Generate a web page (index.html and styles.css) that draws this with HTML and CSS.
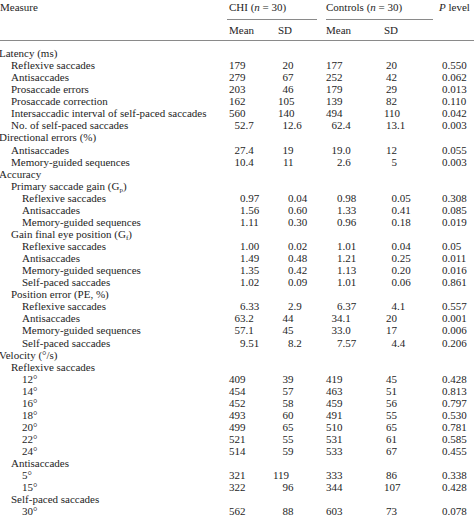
FILE: index.html
```html
<!DOCTYPE html>
<html>
<head>
<meta charset="utf-8">
<link rel="stylesheet" href="styles.css">
</head>
<body>
<div class="table">
  <div class="head">
    <div class="hrow top">
      <span class="lab">Measure</span>
      <span class="grp chi">CHI (<i>n</i> = 30)</span>
      <span class="grp ctl">Controls (<i>n</i> = 30)</span>
      <span class="plev"><i>P</i> level</span>
    </div>
    <div class="hrow sub">
      <span class="lab"></span>
      <span class="hc">Mean</span>
      <span class="hc">SD</span>
      <span class="hc">Mean</span>
      <span class="hc">SD</span>
      <span></span>
    </div>
  </div>
  <div class="body">
    <div class="row l0"><span class="lab">Latency (ms)</span></div>
    <div class="row l1"><span class="lab">Reflexive saccades</span><span class="n c1"><span class="i">179</span></span><span class="n c2"><span class="i">20</span></span><span class="n c3"><span class="i">177</span></span><span class="n c4"><span class="i">20</span></span><span class="p">0.550</span></div>
    <div class="row l1"><span class="lab">Antisaccades</span><span class="n c1"><span class="i">279</span></span><span class="n c2"><span class="i">67</span></span><span class="n c3"><span class="i">252</span></span><span class="n c4"><span class="i">42</span></span><span class="p">0.062</span></div>
    <div class="row l1"><span class="lab">Prosaccade errors</span><span class="n c1"><span class="i">203</span></span><span class="n c2"><span class="i">46</span></span><span class="n c3"><span class="i">179</span></span><span class="n c4"><span class="i">29</span></span><span class="p">0.013</span></div>
    <div class="row l1"><span class="lab">Prosaccade correction</span><span class="n c1"><span class="i">162</span></span><span class="n c2"><span class="i">105</span></span><span class="n c3"><span class="i">139</span></span><span class="n c4"><span class="i">82</span></span><span class="p">0.110</span></div>
    <div class="row l1"><span class="lab">Intersaccadic interval of self-paced saccades</span><span class="n c1"><span class="i">560</span></span><span class="n c2"><span class="i">140</span></span><span class="n c3"><span class="i">494</span></span><span class="n c4"><span class="i">110</span></span><span class="p">0.042</span></div>
    <div class="row l1"><span class="lab">No. of self-paced saccades</span><span class="n c1"><span class="i">52</span>.7</span><span class="n c2"><span class="i">12</span>.6</span><span class="n c3"><span class="i">62</span>.4</span><span class="n c4"><span class="i">13</span>.1</span><span class="p">0.003</span></div>
    <div class="row l0"><span class="lab">Directional errors (%)</span></div>
    <div class="row l1"><span class="lab">Antisaccades</span><span class="n c1"><span class="i">27</span>.4</span><span class="n c2"><span class="i">19</span></span><span class="n c3"><span class="i">19</span>.0</span><span class="n c4"><span class="i">12</span></span><span class="p">0.055</span></div>
    <div class="row l1"><span class="lab">Memory-guided sequences</span><span class="n c1"><span class="i">10</span>.4</span><span class="n c2"><span class="i">11</span></span><span class="n c3"><span class="i">2</span>.6</span><span class="n c4"><span class="i">5</span></span><span class="p">0.003</span></div>
    <div class="row l0"><span class="lab">Accuracy</span></div>
    <div class="row l1"><span class="lab">Primary saccade gain (G<sub>p</sub>)</span></div>
    <div class="row l2"><span class="lab">Reflexive saccades</span><span class="n c1"><span class="i">0</span>.97</span><span class="n c2"><span class="i">0</span>.04</span><span class="n c3"><span class="i">0</span>.98</span><span class="n c4"><span class="i">0</span>.05</span><span class="p">0.308</span></div>
    <div class="row l2"><span class="lab">Antisaccades</span><span class="n c1"><span class="i">1</span>.56</span><span class="n c2"><span class="i">0</span>.60</span><span class="n c3"><span class="i">1</span>.33</span><span class="n c4"><span class="i">0</span>.41</span><span class="p">0.085</span></div>
    <div class="row l2"><span class="lab">Memory-guided sequences</span><span class="n c1"><span class="i">1</span>.11</span><span class="n c2"><span class="i">0</span>.30</span><span class="n c3"><span class="i">0</span>.96</span><span class="n c4"><span class="i">0</span>.18</span><span class="p">0.019</span></div>
    <div class="row l1"><span class="lab">Gain final eye position (G<sub>f</sub>)</span></div>
    <div class="row l2"><span class="lab">Reflexive saccades</span><span class="n c1"><span class="i">1</span>.00</span><span class="n c2"><span class="i">0</span>.02</span><span class="n c3"><span class="i">1</span>.01</span><span class="n c4"><span class="i">0</span>.04</span><span class="p">0.05</span></div>
    <div class="row l2"><span class="lab">Antisaccades</span><span class="n c1"><span class="i">1</span>.49</span><span class="n c2"><span class="i">0</span>.48</span><span class="n c3"><span class="i">1</span>.21</span><span class="n c4"><span class="i">0</span>.25</span><span class="p">0.011</span></div>
    <div class="row l2"><span class="lab">Memory-guided sequences</span><span class="n c1"><span class="i">1</span>.35</span><span class="n c2"><span class="i">0</span>.42</span><span class="n c3"><span class="i">1</span>.13</span><span class="n c4"><span class="i">0</span>.20</span><span class="p">0.016</span></div>
    <div class="row l2"><span class="lab">Self-paced saccades</span><span class="n c1"><span class="i">1</span>.02</span><span class="n c2"><span class="i">0</span>.09</span><span class="n c3"><span class="i">1</span>.01</span><span class="n c4"><span class="i">0</span>.06</span><span class="p">0.861</span></div>
    <div class="row l1"><span class="lab">Position error (PE, %)</span></div>
    <div class="row l2"><span class="lab">Reflexive saccades</span><span class="n c1"><span class="i">6</span>.33</span><span class="n c2"><span class="i">2</span>.9</span><span class="n c3"><span class="i">6</span>.37</span><span class="n c4"><span class="i">4</span>.1</span><span class="p">0.557</span></div>
    <div class="row l2"><span class="lab">Antisaccades</span><span class="n c1"><span class="i">63</span>.2</span><span class="n c2"><span class="i">44</span></span><span class="n c3"><span class="i">34</span>.1</span><span class="n c4"><span class="i">20</span></span><span class="p">0.001</span></div>
    <div class="row l2"><span class="lab">Memory-guided sequences</span><span class="n c1"><span class="i">57</span>.1</span><span class="n c2"><span class="i">45</span></span><span class="n c3"><span class="i">33</span>.0</span><span class="n c4"><span class="i">17</span></span><span class="p">0.006</span></div>
    <div class="row l2"><span class="lab">Self-paced saccades</span><span class="n c1"><span class="i">9</span>.51</span><span class="n c2"><span class="i">8</span>.2</span><span class="n c3"><span class="i">7</span>.57</span><span class="n c4"><span class="i">4</span>.4</span><span class="p">0.206</span></div>
    <div class="row l0"><span class="lab">Velocity (°/s)</span></div>
    <div class="row l1"><span class="lab">Reflexive saccades</span></div>
    <div class="row l2"><span class="lab">12°</span><span class="n c1"><span class="i">409</span></span><span class="n c2"><span class="i">39</span></span><span class="n c3"><span class="i">419</span></span><span class="n c4"><span class="i">45</span></span><span class="p">0.428</span></div>
    <div class="row l2"><span class="lab">14°</span><span class="n c1"><span class="i">454</span></span><span class="n c2"><span class="i">57</span></span><span class="n c3"><span class="i">463</span></span><span class="n c4"><span class="i">51</span></span><span class="p">0.813</span></div>
    <div class="row l2"><span class="lab">16°</span><span class="n c1"><span class="i">452</span></span><span class="n c2"><span class="i">58</span></span><span class="n c3"><span class="i">459</span></span><span class="n c4"><span class="i">56</span></span><span class="p">0.797</span></div>
    <div class="row l2"><span class="lab">18°</span><span class="n c1"><span class="i">493</span></span><span class="n c2"><span class="i">60</span></span><span class="n c3"><span class="i">491</span></span><span class="n c4"><span class="i">55</span></span><span class="p">0.530</span></div>
    <div class="row l2"><span class="lab">20°</span><span class="n c1"><span class="i">499</span></span><span class="n c2"><span class="i">65</span></span><span class="n c3"><span class="i">510</span></span><span class="n c4"><span class="i">65</span></span><span class="p">0.781</span></div>
    <div class="row l2"><span class="lab">22°</span><span class="n c1"><span class="i">521</span></span><span class="n c2"><span class="i">55</span></span><span class="n c3"><span class="i">531</span></span><span class="n c4"><span class="i">61</span></span><span class="p">0.585</span></div>
    <div class="row l2"><span class="lab">24°</span><span class="n c1"><span class="i">514</span></span><span class="n c2"><span class="i">59</span></span><span class="n c3"><span class="i">533</span></span><span class="n c4"><span class="i">67</span></span><span class="p">0.455</span></div>
    <div class="row l1"><span class="lab">Antisaccades</span></div>
    <div class="row l2"><span class="lab">5°</span><span class="n c1"><span class="i">321</span></span><span class="n c2 sh"><span class="i">119</span></span><span class="n c3"><span class="i">333</span></span><span class="n c4"><span class="i">86</span></span><span class="p">0.338</span></div>
    <div class="row l2"><span class="lab">15°</span><span class="n c1"><span class="i">322</span></span><span class="n c2"><span class="i">96</span></span><span class="n c3"><span class="i">344</span></span><span class="n c4"><span class="i">107</span></span><span class="p">0.428</span></div>
    <div class="row l1"><span class="lab">Self-paced saccades</span></div>
    <div class="row l2"><span class="lab">30°</span><span class="n c1"><span class="i">562</span></span><span class="n c2"><span class="i">88</span></span><span class="n c3"><span class="i">603</span></span><span class="n c4"><span class="i">73</span></span><span class="p">0.078</span></div>
  </div>
</div>
</body>
</html>
```

FILE: styles.css
```css
html, body {
  margin: 0;
  padding: 0;
  background: #ffffff;
}

body {
  font-family: "Liberation Serif", "Times New Roman", serif;
  font-size: 11px;
  color: #1e1e1e;
  width: 474px;
  overflow: hidden;
}

.table {
  width: 474px;
}

.head {
  padding-top: 1px;
  border-bottom: 1px solid #8a8a8a;
  padding-bottom: 4px;
}

.hrow,
.row {
  display: grid;
  grid-template-columns: 229px 49px 48px 58px 52px 38px;
  white-space: nowrap;
}

.hrow {
  line-height: 12px;
}

.hrow.top {
  align-items: start;
}

.hrow.top .lab {
  grid-column: 1;
}

.grp {
  padding-bottom: 6px;
  border-bottom: 1px solid #8a8a8a;
}

.grp.chi {
  grid-column: 2 / 4;
  margin-left: -2px;
  padding-left: 2px;
  margin-right: 9px;
}

.grp.ctl {
  grid-column: 4 / 6;
  margin-right: 3px;
}

.plev {
  grid-column: 6;
  padding-left: 3px;
  overflow: visible;
}

.hrow.sub {
  margin-top: 4px;
}

.body {
  padding-top: 6px;
}

.row {
  height: 12.07px;
  line-height: 12.07px;
}

.lab {
  overflow: visible;
}

.l0 .lab {
  padding-left: 0;
  margin-left: -1px;
}

.l1 .lab {
  padding-left: 11px;
}

.l2 .lab {
  padding-left: 22px;
}

sub {
  font-size: 7px;
  line-height: 0;
  vertical-align: -2px;
}

.n .i {
  display: inline-block;
  text-align: right;
}

.c1 .i {
  width: 16.5px;
}

.c2 .i {
  width: 15.5px;
}

.c3 .i {
  width: 16.5px;
}

.c4 .i {
  width: 13px;
}

.c2.sh {
  margin-left: -5px;
}

.p {
  padding-left: 6px;
}
```
